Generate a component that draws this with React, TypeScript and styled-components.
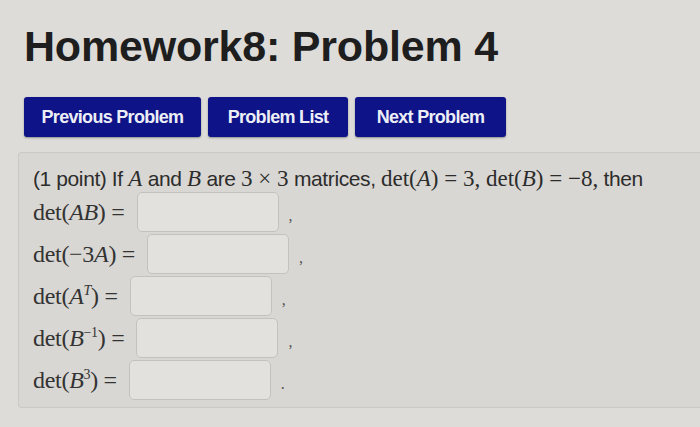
import React from 'react';
import styled, { createGlobalStyle } from 'styled-components';

const GlobalStyle = createGlobalStyle`
  html, body {
    margin: 0;
    padding: 0;
    background: #dedcd8;
    font-family: "Liberation Sans", Arial, sans-serif;
    color: #2a2a2a;
  }
`;

const Page = styled.div`
  width: 700px;
  height: 427px;
  overflow: hidden;
  padding: 20px 0 0 18px;
  box-sizing: border-box;
`;

const Title = styled.h1`
  margin: 0 0 0 6px;
  font-size: 43px;
  font-weight: bold;
  line-height: 52px;
  color: #1e1e1e;
  letter-spacing: -0.2px;
`;

const NavBar = styled.div`
  display: flex;
  gap: 7px;
  margin: 25px 0 0 6px;
`;

const NavButton = styled.button<{ $w: number }>`
  width: ${p => p.$w}px;
  height: 40px;
  padding: 0;
  border: none;
  border-radius: 3px;
  background: #0e1388;
  color: #eceef6;
  font-family: "Liberation Sans", Arial, sans-serif;
  font-size: 18px;
  font-weight: bold;
  letter-spacing: -0.7px;
  box-shadow: 0 1px 2px rgba(0, 0, 0, 0.35);
`;

const Panel = styled.div`
  margin-top: 15px;
  border: 1px solid #cbc9c5;
  border-right: none;
  border-radius: 4px 0 0 4px;
  background: #d9d7d3;
  padding: 14px 0 8px 14px;
  height: 256px;
  box-sizing: border-box;
`;

const Intro = styled.div`
  font-size: 21px;
  line-height: 24px;
  color: #2c2c2c;
  letter-spacing: -0.4px;
  white-space: nowrap;
`;

const M = styled.span`
  font-family: "Liberation Serif", "Times New Roman", serif;
  font-size: 23px;
  letter-spacing: 0;
`;

const I = styled.i`
  font-family: "Liberation Serif", "Times New Roman", serif;
  font-style: italic;
`;

const Sup = styled.sup`
  font-size: 14px;
`;

const Row = styled.div`
  display: flex;
  align-items: center;
  height: 42px;
`;

const Label = styled.span`
  font-family: "Liberation Serif", "Times New Roman", serif;
  font-size: 24px;
  color: #333;
  margin-right: 12px;
  white-space: nowrap;
  letter-spacing: -0.3px;
`;

const Answer = styled.input`
  width: 142px;
  height: 40px;
  box-sizing: border-box;
  border: 1.5px solid #c4c2be;
  border-radius: 5px;
  background: #e3e1dd;
  outline: none;
`;

const Punct = styled.span`
  font-family: "Liberation Serif", serif;
  font-size: 16px;
  color: #555;
  margin-left: 10px;
  padding-top: 8px;
`;

const rows: { label: React.ReactNode; end: string }[] = [
  { label: <>det(<I>AB</I>) =</>, end: ',' },
  { label: <>det(−3<I>A</I>) =</>, end: ',' },
  { label: <>det(<I>A</I><Sup><I>T</I></Sup>) =</>, end: ',' },
  { label: <>det(<I>B</I><Sup>−1</Sup>) =</>, end: ',' },
  { label: <>det(<I>B</I><Sup>3</Sup>) =</>, end: '.' },
];

export default function App() {
  return (
    <Page>
      <GlobalStyle />
      <Title>Homework8: Problem 4</Title>
      <NavBar>
        <NavButton $w={177}>Previous Problem</NavButton>
        <NavButton $w={140}>Problem List</NavButton>
        <NavButton $w={151}>Next Problem</NavButton>
      </NavBar>
      <Panel>
        <Intro>
          (1 point) If <M><I>A</I></M> and <M><I>B</I></M> are <M>3 × 3</M> matrices,{' '}
          <M>det(<I>A</I>) = 3, det(<I>B</I>) = −8,</M> then
        </Intro>
        {rows.map((r, i) => (
          <Row key={i}>
            <Label>{r.label}</Label>
            <Answer />
            <Punct>{r.end}</Punct>
          </Row>
        ))}
      </Panel>
    </Page>
  );
}
